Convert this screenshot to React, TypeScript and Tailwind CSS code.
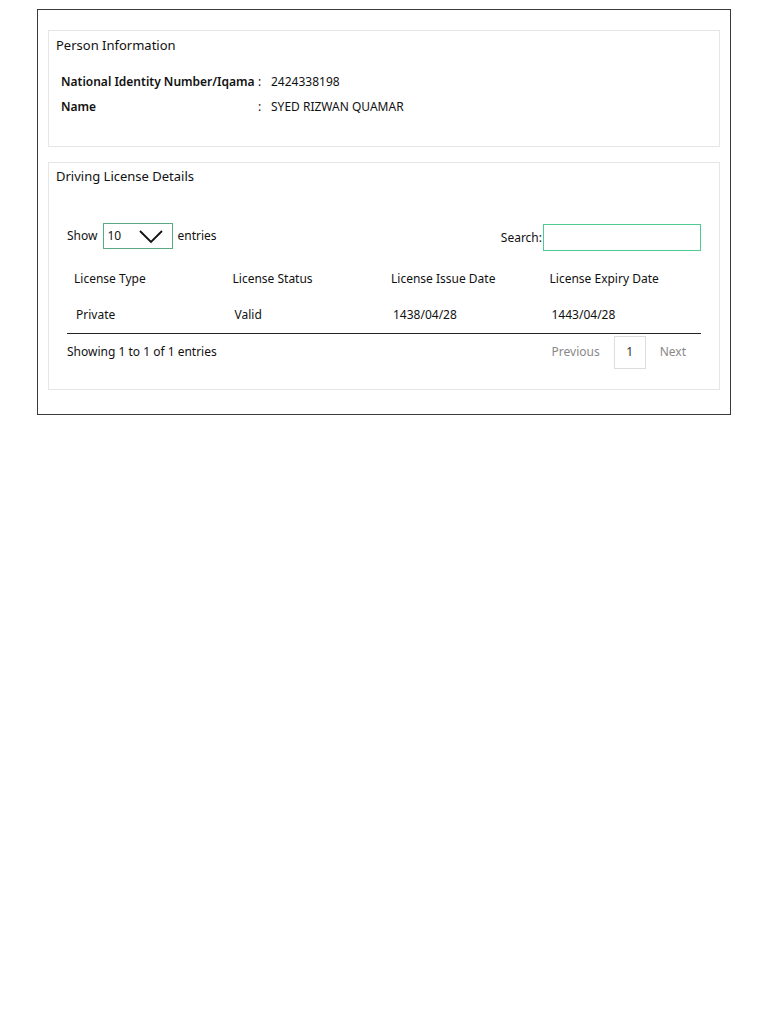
import React from 'react';

const font = { fontFamily: '"Noto Sans", Inter, sans-serif' };

const licenses = [
  { type: 'Private', status: 'Valid', issue: '1438/04/28', expiry: '1443/04/28' },
];

function InfoRow({ label, value }: { label: string; value: string }) {
  return (
    <div className="flex h-[25px] items-center whitespace-nowrap text-[12px] text-[#111]">
      <span className="w-[197px] font-semibold">{label}</span>
      <span className="w-[13px]">:</span>
      <span>{value}</span>
    </div>
  );
}

export default function App() {
  return (
    <div className="min-h-screen bg-white pt-[9px] pl-[37px]" style={font}>
      <div className="w-[694px] border border-[#3a3a3a] px-[10px] pt-[20px] pb-[24px]">
        {/* person info */}
        <div className="h-[117px] border border-[#e6e6e6]">
          <div className="pl-[7px] pt-[5px] text-[13px] leading-[18px] text-[#111]">Person Information</div>
          <div className="mt-[15px] pl-[12px]">
            <InfoRow label="National Identity Number/Iqama" value="2424338198" />
            <InfoRow label="Name" value="SYED RIZWAN QUAMAR" />
          </div>
        </div>

        {/* driving license */}
        <div className="mt-[15px] border border-[#e6e6e6] pb-[20px]">
          <div className="pl-[7px] pt-[4px] text-[13px] leading-[18px] text-[#111]">Driving License Details</div>

          <div className="px-[18px]">
            <div className="mt-[38px] flex items-start justify-between text-[12px] text-[#111]">
              <div className="flex items-center">
                <span>Show</span>
                <div className="ml-[6px] flex h-[26px] w-[70px] items-center border border-[#5aa982] pl-[3px]">
                  <span>10</span>
                  <svg className="ml-[17px]" width="26" height="16" viewBox="0 0 26 16" fill="none">
                    <polyline points="2,3 13,14 24,3" stroke="#111" strokeWidth="1.8" />
                  </svg>
                </div>
                <span className="ml-[4px]">entries</span>
              </div>
              <div className="mt-[1px] flex items-center">
                <span>Search:</span>
                <input className="ml-[1px] h-[27px] w-[158px] border border-[#4ecb91] outline-none" />
              </div>
            </div>

            <table className="mt-[10px] w-full table-fixed border-collapse text-[12px] text-[#111]">
              <thead>
                <tr className="h-[36px]">
                  <th className="pl-[7px] text-left font-normal">License Type</th>
                  <th className="pl-[7px] text-left font-normal">License Status</th>
                  <th className="pl-[7px] text-left font-normal">License Issue Date</th>
                  <th className="pl-[7px] text-left font-normal">License Expiry Date</th>
                </tr>
              </thead>
              <tbody>
                {licenses.map((l) => (
                  <tr key={l.type} className="h-[36px] border-b border-[#222]">
                    <td className="pl-[9px]">{l.type}</td>
                    <td className="pl-[9px]">{l.status}</td>
                    <td className="pl-[9px]">{l.issue}</td>
                    <td className="pl-[9px]">{l.expiry}</td>
                  </tr>
                ))}
              </tbody>
            </table>

            <div className="mt-[2px] flex items-center justify-between text-[12px]">
              <span className="text-[#111]">Showing 1 to 1 of 1 entries</span>
              <div className="flex items-center">
                <span className="text-[#888]">Previous</span>
                <span className="ml-[14px] flex h-[33px] w-[32px] items-center justify-center border border-[#ddd] text-[#333]">1</span>
                <span className="ml-[14px] mr-[15px] text-[#888]">Next</span>
              </div>
            </div>
          </div>
        </div>
      </div>
    </div>
  );
}
